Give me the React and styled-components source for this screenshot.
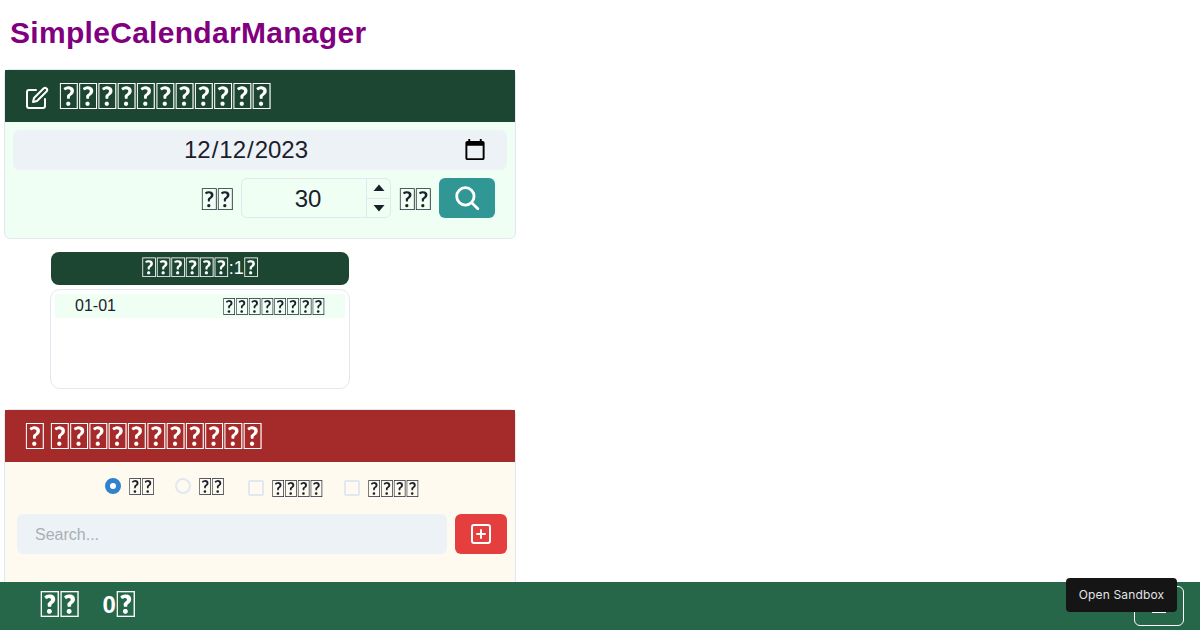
import React from 'react'
import styled, { createGlobalStyle } from 'styled-components'
import { FiEdit, FiPlusSquare } from 'react-icons/fi'

const GlobalStyle = createGlobalStyle`
    html, body {
        margin: 0;
        padding: 0;
        height: 100%;
        overflow: hidden;
        background: white;
        font-family: "Liberation Sans", Arial, sans-serif;
        color: #1a202c;
    }
`

// the reference shows missing-glyph boxes, one per character
const Tofu = styled.span`
    display: inline-block;
    font-family: Lato, sans-serif;
    font-size: 1.5em;
    line-height: 1;
    vertical-align: -0.11em;
    will-change: transform;
`

const box = (n) => <Tofu>{'\uE000'.repeat(n)}</Tofu>

const Page = styled.div`
    width: 510px;
    padding: 0 0 0 5px;
`

const Title = styled.h1`
    margin: 0;
    padding: 14px 0 0 5px;
    height: 69px;
    box-sizing: border-box;
    font-size: 30px;
    line-height: 38px;
    letter-spacing: 0.3px;
    font-weight: 700;
    color: purple;
`

const Panel = styled.section`
    box-sizing: border-box;
    margin-left: -1px;
    width: 512px;
    height: ${(p) => p.$height}px;
    background: ${(p) => p.$bg};
    border: 1px solid #e2e8f0;
    border-radius: 6px;
`

const PanelHead = styled.h2`
    display: flex;
    align-items: center;
    gap: ${(p) => p.$gap}px;
    box-sizing: border-box;
    margin: 0;
    height: 52px;
    padding: 0 20px 3px;
    font-size: 24px;
    font-weight: 500;
    color: white;
    background: ${(p) => p.$bg};
    svg {
        margin-top: 7px;
    }
`

const DateField = styled.input`
    display: block;
    box-sizing: border-box;
    width: 494px;
    height: 40px;
    margin: 8px 8px;
    padding: 0 18px;
    border: none;
    border-radius: 6px;
    background: #edf2f7;
    color: #1a202c;
    font: 24px "Liberation Sans", Arial, sans-serif;
    text-align: center;
    outline: none;
`

const RangeRow = styled.div`
    display: flex;
    justify-content: flex-end;
    align-items: center;
    gap: 8px;
    padding-right: 20px;
    font-size: 20px;
`

const Stepper = styled.div`
    display: flex;
    box-sizing: border-box;
    width: 150px;
    height: 40px;
    border: 1px solid #e2e8f0;
    border-radius: 6px;
`

const StepValue = styled.div`
    flex: 1;
    font-size: 24px;
    line-height: 40px;
    text-align: center;
    padding-left: 8px;
`

const StepButtons = styled.div`
    display: flex;
    flex-direction: column;
    width: 23px;
    border-left: 1px solid #e2e8f0;
`

const StepButton = styled.div`
    flex: 1;
    display: flex;
    align-items: center;
    justify-content: center;
    & + & {
        border-top: 1px solid #e2e8f0;
    }
`

const SearchButton = styled.button`
    display: flex;
    align-items: center;
    justify-content: center;
    width: 56px;
    height: 40px;
    padding: 0;
    border: none;
    border-radius: 6px;
    background: #319795;
    color: white;
`

const Result = styled.div`
    width: 300px;
    margin: 13px 0 20px 45px;
`

const ResultHead = styled.div`
    box-sizing: border-box;
    margin-left: 1px;
    width: 298px;
    height: 33px;
    border-radius: 8px;
    background: #1c4532;
    color: white;
    font-size: 18px;
    font-weight: 500;
    line-height: 33px;
    text-align: center;
`

const ResultList = styled.ul`
    box-sizing: border-box;
    height: 100px;
    margin: 4px 0 0;
    padding: 4px;
    list-style: none;
    border: 1px solid #e2e8f0;
    border-radius: 10px;
`

const ResultRow = styled.li`
    display: flex;
    justify-content: space-between;
    height: 24px;
    padding: 0 20px;
    background: #f0fff4;
    font-size: 16px;
    line-height: 24px;
`

const Options = styled.div`
    display: flex;
    align-items: center;
    height: 48px;
    margin-bottom: 4px;
    padding-left: 100px;
    font-size: 16px;
`

const Option = styled.label`
    display: flex;
    align-items: center;
    gap: 8px;
    margin-right: ${(p) => p.$gap}px;
    transform: translateY(${(p) => p.$drop || 0}px);
`

const Radio = styled.span`
    box-sizing: border-box;
    width: 16px;
    height: 16px;
    border-radius: 50%;
    border: ${(p) => (p.$on ? '5px solid #3182ce' : '2px solid #e2e8f0')};
    background: ${(p) => (p.$on ? 'white' : 'transparent')};
`

const Check = styled.span`
    box-sizing: border-box;
    width: 16px;
    height: 16px;
    border-radius: 2px;
    border: 2px solid #e2e8f0;
`

const SearchRow = styled.div`
    display: flex;
    gap: 8px;
    padding: 0 8px 0 12px;
`

const SearchField = styled.input`
    flex: 1;
    box-sizing: border-box;
    min-width: 0;
    height: 40px;
    padding: 1px 18px 0;
    border: none;
    border-radius: 6px;
    background: #edf2f7;
    font: 16px "Liberation Sans", Arial, sans-serif;
    &::placeholder {
        color: #a9afb3;
    }
`

const AddButton = styled.button`
    display: flex;
    align-items: center;
    justify-content: center;
    width: 52px;
    height: 40px;
    padding: 0;
    border: none;
    border-radius: 6px;
    background: #e53e3e;
    color: white;
`

const Footer = styled.footer`
    position: fixed;
    left: 0;
    right: 0;
    bottom: 0;
    box-sizing: border-box;
    height: 48px;
    display: flex;
    align-items: center;
    gap: 23px;
    padding: 0 0 6px 40px;
    background: #276749;
    color: white;
    font-size: 24px;
    font-weight: 700;
`

const SandboxButton = styled.div`
    position: fixed;
    right: 16px;
    bottom: 4px;
    box-sizing: border-box;
    width: 50px;
    height: 40px;
    border: 1px solid white;
    border-radius: 6px;
    display: flex;
    justify-content: center;
    padding-top: 25px;
    &::before {
        content: '';
        width: 14px;
        height: 1px;
        background: white;
    }
`

const Tooltip = styled.div`
    position: fixed;
    left: 1066px;
    top: 578px;
    box-sizing: border-box;
    width: 111px;
    height: 34px;
    border-radius: 4px;
    background: #151515;
    color: #e4e4e4;
    font: 12px/34px Inter, "Liberation Sans", sans-serif;
    letter-spacing: 0.15px;
    text-align: center;
`

const SearchGlyph = () => (
    <svg width="26" height="26" viewBox="0 0 24 24" fill="none" stroke="currentColor" strokeWidth="2.6" strokeLinecap="round">
        <circle cx="10.5" cy="10.5" r="8" />
        <path d="M16.5 16.5L22 22" />
    </svg>
)

const Arrow = ({ down }) => (
    <svg width="12" height="8" viewBox="0 0 12 8" fill="#1a202c">
        <path d={down ? 'M0.5 1h11L6 7.5z' : 'M0.5 7h11L6 0.5z'} />
    </svg>
)

const App = () => {
    return (
        <Page>
            <GlobalStyle />
            <Title>SimpleCalendarManager</Title>

            <Panel $bg="#f0fff4" $height={170}>
                <PanelHead $bg="#1c4532" $gap={10}>
                    <FiEdit size={24} />
                    {box(11)}
                </PanelHead>
                <DateField type="date" defaultValue="2023-12-12" />
                <RangeRow>
                    {box(2)}
                    <Stepper>
                        <StepValue>30</StepValue>
                        <StepButtons>
                            <StepButton><Arrow /></StepButton>
                            <StepButton><Arrow down /></StepButton>
                        </StepButtons>
                    </Stepper>
                    {box(2)}
                    <SearchButton><SearchGlyph /></SearchButton>
                </RangeRow>
            </Panel>

            <Result>
                <ResultHead>{box(6)}:1{box(1)}</ResultHead>
                <ResultList>
                    <ResultRow>
                        <span>01-01</span>
                        <span>{box(8)}</span>
                    </ResultRow>
                </ResultList>
            </Result>

            <Panel $bg="floralwhite" $height={221}>
                <PanelHead $bg="brown" $gap={6}>
                    {box(1)}{box(11)}
                </PanelHead>
                <Options>
                    <Option $gap={20}><Radio $on />{box(2)}</Option>
                    <Option $gap={24}><Radio />{box(2)}</Option>
                    <Option $gap={21} $drop={2}><Check />{box(4)}</Option>
                    <Option $gap={0} $drop={2}><Check />{box(4)}</Option>
                </Options>
                <SearchRow>
                    <SearchField placeholder="Search..." />
                    <AddButton><FiPlusSquare size={24} /></AddButton>
                </SearchRow>
            </Panel>

            <Footer>
                <span>{box(2)}</span>
                <span>0{box(1)}</span>
            </Footer>
            <SandboxButton />
            <Tooltip>Open Sandbox</Tooltip>
        </Page>
    )
}

export default App
